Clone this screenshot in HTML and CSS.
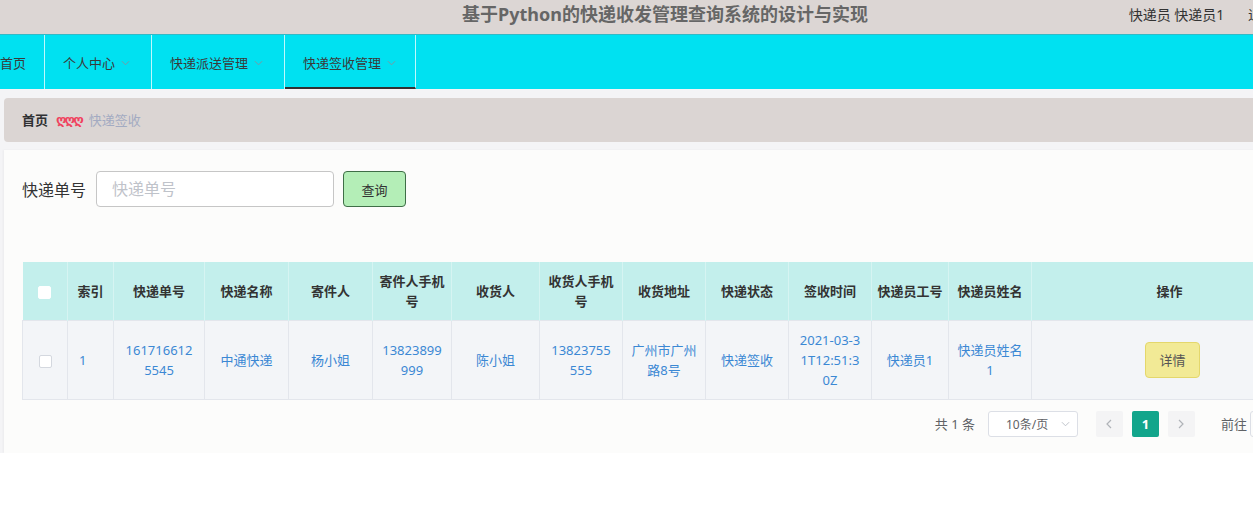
FILE: index.html
```html
<!DOCTYPE html>
<html lang="zh-CN">
<head>
    <meta charset="UTF-8">
    <meta name="viewport" content="width=device-width, initial-scale=1.0">
    <title>快递签收</title>
    <link rel="stylesheet" href="styles.css">
</head>
<body>
    <header class="topbar">
        <div></div>
        <div class="site-title">基于Python的快递收发管理查询系统的设计与实现</div>
        <div class="user-info">
            <span>快递员 快递员1</span>
            <span class="logout">退出登录</span>
        </div>
    </header>

    <nav class="menu">
        <a class="menu-item first">首页</a>
        <a class="menu-item">个人中心<svg class="caret" viewBox="0 0 10 6"><polyline points="1,1 5,5 9,1"/></svg></a>
        <a class="menu-item">快递派送管理<svg class="caret" viewBox="0 0 10 6"><polyline points="1,1 5,5 9,1"/></svg></a>
        <a class="menu-item active">快递签收管理<svg class="caret" viewBox="0 0 10 6"><polyline points="1,1 5,5 9,1"/></svg></a>
    </nav>

    <main class="main">
        <div class="breadcrumb">
            <span class="crumb-home">首页</span>
            <span class="crumb-sep">ღღღ</span>
            <span class="crumb-current">快递签收</span>
        </div>

        <section class="content">
            <div class="search-row">
                <label class="search-label">快递单号</label>
                <input class="search-input" type="text" placeholder="快递单号">
                <button class="btn-search">查询</button>
            </div>

            <table class="data-table">
                <colgroup>
                    <col style="width:45px"><col style="width:46px"><col style="width:91px"><col style="width:84px">
                    <col style="width:84px"><col style="width:79px"><col style="width:88px"><col style="width:83px">
                    <col style="width:83px"><col style="width:83px"><col style="width:83px"><col style="width:77px">
                    <col style="width:83px"><col>
                </colgroup>
                <thead>
                    <tr>
                        <th><span class="check check-head"></span></th>
                        <th>索引</th>
                        <th>快递单号</th>
                        <th>快递名称</th>
                        <th>寄件人</th>
                        <th>寄件人手机<br>号</th>
                        <th>收货人</th>
                        <th>收货人手机<br>号</th>
                        <th>收货地址</th>
                        <th>快递状态</th>
                        <th>签收时间</th>
                        <th>快递员工号</th>
                        <th>快递员姓名</th>
                        <th>操作</th>
                    </tr>
                </thead>
                <tbody>
                    <tr>
                        <td><span class="check"></span></td>
                        <td class="left">1</td>
                        <td>161716612<br>5545</td>
                        <td>中通快递</td>
                        <td>杨小姐</td>
                        <td>13823899<br>999</td>
                        <td>陈小姐</td>
                        <td>13823755<br>555</td>
                        <td>广州市广州<br>路8号</td>
                        <td>快递签收</td>
                        <td>2021-03-3<br>1T12:51:3<br>0Z</td>
                        <td>快递员1</td>
                        <td>快递员姓名<br>1</td>
                        <td><button class="btn-detail">详情</button></td>
                    </tr>
                </tbody>
            </table>

            <div class="pagination">
                <span class="total">共 1 条</span>
                <div class="page-size">10条/页<svg class="caret" viewBox="0 0 10 6"><polyline points="1,1 5,5 9,1"/></svg></div>
                <span class="page-btn"><svg viewBox="0 0 6 10"><polyline points="5,1 1,5 5,9"/></svg></span>
                <span class="page-num">1</span>
                <span class="page-btn"><svg viewBox="0 0 6 10"><polyline points="1,1 5,5 1,9"/></svg></span>
                <span class="jump">前往</span>
                <span class="jump-input">1</span>
                <span class="jump">页</span>
            </div>
        </section>
    </main>
</body>
</html>
```

FILE: styles.css
```css
:root {
    --top-bg: #dcd6d4;
    --menu-bg: #00e1f1;
    --crumb-bg: #dbd5d3;
    --head-bg: #c3efec;
    --row-bg: #f3f5f8;
    --cell-border: #e3e6ec;
    --link-blue: #3b88d4;
    --text-dark: #303133;
}

* {
    margin: 0;
    padding: 0;
    box-sizing: border-box;
}

html, body {
    overflow: hidden;
}

body {
    width: 1330px;
    font-family: "Noto Sans", "Noto Sans CJK SC", sans-serif;
    font-size: 13px;
    color: var(--text-dark);
    background: #ffffff;
}

.topbar {
    height: 34px;
    background: var(--top-bg);
    display: grid;
    grid-template-columns: 1fr auto 1fr;
    align-items: center;
}

.site-title {
    font-size: 18px;
    font-weight: bold;
    color: #666666;
    line-height: 26px;
    margin-top: -7px;
}

.user-info {
    justify-self: end;
    padding-right: 26px;
    font-size: 14px;
    color: #333333;
    margin-top: -7px;
}

.logout {
    margin-left: 20px;
}

.menu {
    height: 55px;
    background: var(--menu-bg);
    border-top: 1px solid #33b9c6;
    display: flex;
}

.menu-item {
    display: flex;
    align-items: center;
    padding: 1px 21px 0 18px;
    border-right: 1px solid rgba(255, 255, 255, 0.75);
    color: #3a3a3a;
    font-size: 13px;
    line-height: 20px;
}

.menu-item.first {
    padding-left: 0;
    padding-right: 18px;
}

.menu-item.active {
    border-bottom: 2px solid #303133;
    padding-top: 3px;
    padding-right: 19px;
}

.caret {
    width: 9px;
    height: 6px;
    margin-left: 6px;
    fill: none;
    stroke: #8a8f99;
    stroke-width: 1;
}

.main {
    background: #f4f4f6;
    padding: 9px 0 0 4px;
}

.breadcrumb {
    height: 44px;
    background: var(--crumb-bg);
    border-radius: 4px;
    display: flex;
    align-items: center;
    padding: 0 18px;
    line-height: 20px;
}

.crumb-home {
    font-weight: bold;
    color: var(--text-dark);
}

.crumb-sep {
    font-family: "DejaVu Sans", sans-serif;
    color: #f0435f;
    font-size: 13px;
    font-weight: bold;
    margin: 0 7px 0 8px;
    letter-spacing: -2px;
}

.crumb-current {
    color: #a3abc2;
}

.content {
    margin-top: 8px;
    background: #fcfcfb;
    padding: 21px 18px 16px;
    box-shadow: -1px 0 2px rgba(0, 0, 0, 0.04);
}

.search-row {
    display: flex;
    align-items: center;
}

.search-label {
    font-size: 16px;
    color: #333333;
    margin-right: 10px;
}

.search-input {
    width: 238px;
    height: 36px;
    border: 1px solid #c6c6c6;
    border-radius: 4px;
    padding-left: 15px;
    font-family: inherit;
    font-size: 16px;
    background: #ffffff;
}

.search-input::placeholder {
    color: #bfc3ca;
}

.btn-search {
    width: 63px;
    height: 36px;
    margin-left: 9px;
    background: #b4eeb7;
    border: 1px solid #3f6e47;
    border-radius: 4px;
    font-family: inherit;
    font-size: 13px;
    color: #333333;
}

.data-table {
    margin-top: 55px;
    width: 1286px;
    table-layout: fixed;
    border-collapse: collapse;
    text-align: center;
    line-height: 20px;
}

.data-table th {
    height: 58px;
    background: var(--head-bg);
    font-weight: bold;
    color: #333333;
    border-right: 1px solid #d6f4f2;
    white-space: nowrap;
}

.data-table td {
    height: 79px;
    background: var(--row-bg);
    color: var(--link-blue);
    border: 1px solid var(--cell-border);
    white-space: nowrap;
}

.data-table td.left {
    text-align: left;
    padding-left: 11px;
}

.check {
    display: inline-block;
    width: 13px;
    height: 13px;
    background: #ffffff;
    border: 1px solid #d4d8df;
    border-radius: 2px;
    vertical-align: middle;
}

.check-head {
    border-color: #ffffff;
}

.btn-detail {
    width: 55px;
    height: 36px;
    margin-left: 6px;
    background: #f2ea96;
    border: 1px solid #e4d76c;
    border-radius: 4px;
    font-family: inherit;
    font-size: 13px;
    color: #555555;
}

.pagination {
    margin-top: 11px;
    display: flex;
    align-items: center;
    justify-content: flex-end;
    margin-right: -3px;
    color: #606266;
    font-size: 13px;
    white-space: nowrap;
}

.total {
    margin-right: 13px;
}

.page-size {
    width: 90px;
    height: 26px;
    border: 1px solid #dcdfe6;
    border-radius: 3px;
    background: #ffffff;
    display: flex;
    align-items: center;
    padding: 0 7px 0 17px;
    margin-right: 18px;
    font-size: 12px;
}

.page-size .caret {
    margin-left: auto;
    stroke: #b8bcc4;
}

.page-btn, .page-num {
    width: 27px;
    height: 26px;
    border-radius: 2px;
    display: flex;
    align-items: center;
    justify-content: center;
    margin-right: 9px;
}

.page-btn {
    background: #f4f4f5;
}

.page-btn svg {
    width: 6px;
    height: 10px;
    fill: none;
    stroke: #b0b3b8;
    stroke-width: 1.2;
}

.page-num {
    background: #12a58b;
    color: #ffffff;
    font-weight: bold;
}

.jump {
    margin-left: 17px;
}

.jump-input {
    width: 46px;
    height: 26px;
    border: 1px solid #dcdfe6;
    border-radius: 3px;
    margin: 0 6px 0 3px;
    text-align: center;
    line-height: 24px;
}

.jump-input + .jump {
    margin-left: 0;
}
```
